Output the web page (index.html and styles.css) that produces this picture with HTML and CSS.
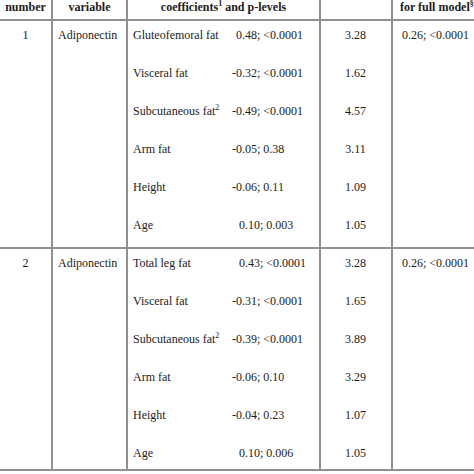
FILE: index.html
```html
<!DOCTYPE html>
<html>
<head>
<meta charset="utf-8">
<link rel="stylesheet" href="styles.css">
</head>
<body>
<div class="table">
  <div class="row head">
    <div class="cell c1 center">number</div>
    <div class="cell c2 center">variable</div>
    <div class="cell c3 center">coefficients<sup>1</sup> and p-levels</div>
    <div class="cell c4"></div>
    <div class="cell c5 headlast">for full model<sup>§</sup></div>
  </div>

  <div class="row group g1">
    <div class="cell c1 center">1</div>
    <div class="cell c2 var">Adiponectin</div>
    <div class="cell c3">
      <div class="stack">
        <div class="pred"><span class="lab">Gluteofemoral fat</span><span class="val pos">0.48; &lt;0.0001</span></div>
        <div class="pred"><span class="lab">Visceral fat</span><span class="val">-0.32; &lt;0.0001</span></div>
        <div class="pred"><span class="lab">Subcutaneous fat<sup>2</sup></span><span class="val">-0.49; &lt;0.0001</span></div>
        <div class="pred"><span class="lab">Arm fat</span><span class="val">-0.05; 0.38</span></div>
        <div class="pred"><span class="lab">Height</span><span class="val">-0.06; 0.11</span></div>
        <div class="pred"><span class="lab">Age</span><span class="val pos2">0.10; 0.003</span></div>
      </div>
    </div>
    <div class="cell c4">
      <div class="stack vif">
        <div>3.28</div>
        <div>1.62</div>
        <div>4.57</div>
        <div>3.11</div>
        <div>1.09</div>
        <div>1.05</div>
      </div>
    </div>
    <div class="cell c5 model">0.26; &lt;0.0001</div>
  </div>

  <div class="row group g2">
    <div class="cell c1 center">2</div>
    <div class="cell c2 var">Adiponectin</div>
    <div class="cell c3">
      <div class="stack">
        <div class="pred"><span class="lab">Total leg fat</span><span class="val pos2">0.43; &lt;0.0001</span></div>
        <div class="pred"><span class="lab">Visceral fat</span><span class="val">-0.31; &lt;0.0001</span></div>
        <div class="pred"><span class="lab">Subcutaneous fat<sup>2</sup></span><span class="val">-0.39; &lt;0.0001</span></div>
        <div class="pred"><span class="lab">Arm fat</span><span class="val">-0.06; 0.10</span></div>
        <div class="pred"><span class="lab">Height</span><span class="val">-0.04; 0.23</span></div>
        <div class="pred"><span class="lab">Age</span><span class="val pos2">0.10; 0.006</span></div>
      </div>
    </div>
    <div class="cell c4">
      <div class="stack vif">
        <div>3.28</div>
        <div>1.65</div>
        <div>3.89</div>
        <div>3.29</div>
        <div>1.07</div>
        <div>1.05</div>
      </div>
    </div>
    <div class="cell c5 model">0.26; &lt;0.0001</div>
  </div>
</div>
</body>
</html>
```

FILE: styles.css
```css
html, body {
  margin: 0;
  padding: 0;
  background: #ffffff;
}

body {
  font-family: "Liberation Serif", "Times New Roman", serif;
  font-size: 12px;
  line-height: 14px;
  color: #1c1c1c;
}

.table {
  width: 474px;
}

.row {
  display: grid;
  grid-template-columns: 53px 75px 193px 72px 81px;
  border-bottom: 2px solid #909090;
}

.cell {
  border-right: 2px solid #909090;
  min-width: 0;
}

.cell.c5 {
  border-right: none;
}

.head {
  height: 19px;
  font-weight: bold;
}

.center {
  text-align: center;
}

.headlast {
  padding-left: 7px;
  white-space: nowrap;
  overflow: hidden;
}

.g1 .cell {
  padding-top: 7px;
  padding-bottom: 15px;
}

.g2 .cell {
  padding-top: 7px;
  padding-bottom: 9px;
}

.var {
  padding-left: 5px;
}

.stack {
  display: flex;
  flex-direction: column;
  gap: 24px;
}

.pred {
  display: flex;
  white-space: nowrap;
}

.lab {
  width: 104px;
  padding-left: 5px;
  box-sizing: border-box;
  flex: none;
}

.val.pos {
  padding-left: 4px;
}

.val.pos2 {
  padding-left: 7px;
}

.vif {
  text-align: center;
  padding-right: 1px;
}

.model {
  padding-left: 9px;
  white-space: nowrap;
}

sup {
  font-size: 8px;
  line-height: 0;
  vertical-align: 5px;
}
```
